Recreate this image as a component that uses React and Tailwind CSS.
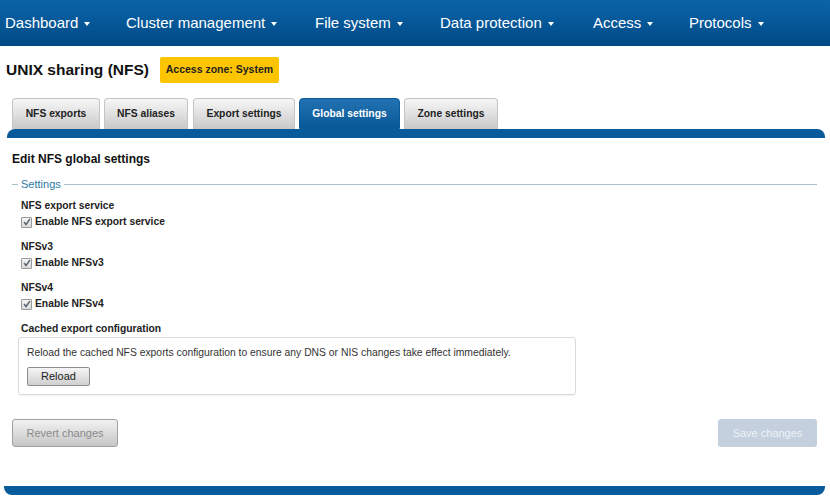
import React from "react";

const Arrow = () => (
  <svg width="6" height="4" viewBox="0 0 6 4" className="ml-[6px] mt-[2px]">
    <path d="M0 0 L6 0 L3 4 Z" fill="#ffffff" />
  </svg>
);

const navItems = [
  { label: "Dashboard", w: "w-[121px]" },
  { label: "Cluster management", w: "w-[189px]" },
  { label: "File system", w: "w-[125px]" },
  { label: "Data protection", w: "w-[153px]" },
  { label: "Access", w: "w-[96px]" },
  { label: "Protocols", w: "w-[120px]" },
];

const Check = ({ label }) => (
  <div className="flex items-center h-[14px] mt-[3px]">
    <span className="w-[11px] h-[11px] border border-[#9a9a9a] bg-gradient-to-b from-[#f4f4f4] to-[#dcdcdc] flex items-center justify-center rounded-[1px]">
      <svg width="8" height="8" viewBox="0 0 8 8">
        <path d="M1 4 L3 6.5 L7 1" stroke="#5a6570" strokeWidth="1.4" fill="none" />
      </svg>
    </span>
    <span className="ml-[3px] text-[10.3px] font-bold text-[#222]">{label}</span>
  </div>
);

const Tab = ({ label, w, active, ml }) => (
  <div
    className={`${w} ${ml} h-[31px] rounded-t-[4px] flex items-center justify-center text-[10.3px] font-bold ${
      active
        ? "bg-gradient-to-b from-[#2272b3] to-[#075896] text-white border border-[#0a5a98]"
        : "bg-gradient-to-b from-[#f7f7f7] to-[#c9c9c9] text-[#222] border border-[#c4c4c4] border-b-0"
    }`}
  >
    {label}
  </div>
);

export default function App() {
  return (
    <div
      className="w-[830px] h-[499px] bg-white overflow-hidden flex flex-col"
      style={{ fontFamily: '"Liberation Sans", Arial, sans-serif' }}
    >
      <nav className="h-[46px] bg-gradient-to-b from-[#0b64a8] to-[#024a86] flex items-center pl-[5px] text-white text-[15px] shrink-0">
        {navItems.map((it) => (
          <div key={it.label} className={`${it.w} flex items-center`}>
            <span>{it.label}</span>
            <Arrow />
          </div>
        ))}
      </nav>

      <div className="flex items-center pl-[6px] mt-[11px] h-[26px]">
        <h1 className="text-[15.5px] font-bold text-[#111]">UNIX sharing (NFS)</h1>
        <div className="ml-[11px] h-[26px] w-[119px] bg-[#fdc500] rounded-[2px] flex items-center justify-center text-[10.5px] font-bold text-[#222]">
          Access zone: System
        </div>
      </div>

      <div className="flex items-end pl-[12px] mt-[15px]">
        <Tab label="NFS exports" w="w-[88px]" ml="" />
        <Tab label="NFS aliases" w="w-[84px]" ml="ml-[4px]" />
        <Tab label="Export settings" w="w-[102px]" ml="ml-[5px]" />
        <Tab label="Global settings" w="w-[101px]" ml="ml-[4px]" active />
        <Tab label="Zone settings" w="w-[94px]" ml="ml-[4px]" />
      </div>
      <div className="ml-[7px] mr-[5px] h-[9px] bg-[#075b9b] rounded-t-[8px]" />

      <div className="pl-[12px] pr-[13px]">
        <h2 className="mt-[14px] text-[12px] font-bold text-[#111] leading-[14px]">
          Edit NFS global settings
        </h2>

        <div className="flex items-center mt-[11px] h-[14px]">
          <span className="w-[6px] h-px bg-[#a9c0c8]" />
          <span className="ml-[3px] text-[11px] text-[#2c79a4]">Settings</span>
          <span className="ml-[3px] flex-1 h-px bg-[#a9c0c8]" />
        </div>

        <div className="pl-[9px]">
          <div className="mt-[8px] text-[10.3px] font-bold text-[#222] leading-[13px]">NFS export service</div>
          <Check label="Enable NFS export service" />

          <div className="mt-[11px] text-[10.3px] font-bold text-[#222] leading-[13px]">NFSv3</div>
          <Check label="Enable NFSv3" />

          <div className="mt-[11px] text-[10.3px] font-bold text-[#222] leading-[13px]">NFSv4</div>
          <Check label="Enable NFSv4" />

          <div className="mt-[11px] text-[10.3px] font-bold text-[#222] leading-[13px]">Cached export configuration</div>
          <div className="ml-[-3px] mt-[2px] w-[558px] h-[58px] border border-[#dadada] rounded-[3px] shadow-[0_1px_1px_rgba(0,0,0,0.06)] pl-[8px] pt-[8px]">
            <div className="text-[10.35px] text-[#333] leading-[13px]">
              Reload the cached NFS exports configuration to ensure any DNS or NIS changes take effect immediately.
            </div>
            <button className="mt-[8px] w-[63px] h-[19px] border border-[#8e8e8e] rounded-[2px] bg-gradient-to-b from-[#f6f6f6] to-[#cfcfcf] text-[11px] text-[#222] flex items-center justify-center">
              Reload
            </button>
          </div>
        </div>

        <div className="flex justify-between mt-[24px]">
          <button className="w-[106px] h-[28px] border border-[#a0a0a0] rounded-[3px] bg-gradient-to-b from-[#f2f2f2] to-[#c6c6c6] text-[11px] text-[#8a8a8a] flex items-center justify-center">
            Revert changes
          </button>
          <button className="w-[99px] h-[28px] rounded-[3px] bg-[#c4d0dd] text-[11px] text-[#eef2f6] flex items-center justify-center">
            Save changes
          </button>
        </div>
      </div>

      <div className="ml-[4px] mr-[5px] mt-[39px] h-[9px] bg-[#075b9b] rounded-b-[8px]" />
    </div>
  );
}
